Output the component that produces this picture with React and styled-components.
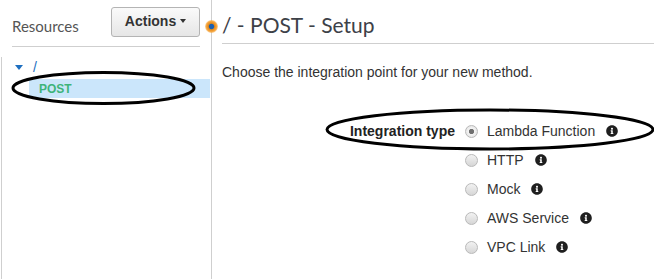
import React from "react";
import styled, { createGlobalStyle } from "styled-components";
import { FaInfoCircle } from "react-icons/fa";

const Global = createGlobalStyle`
  html, body { margin: 0; padding: 0; background: #fff; }
  body { font-family: "Liberation Sans", Arial, sans-serif; color: #333; }
  * { box-sizing: border-box; }
`;

const Page = styled.div`
  position: relative;
  display: flex;
  width: 654px;
  height: 279px;
  overflow: hidden;
  background: #fff;
`;

const Sidebar = styled.aside`
  width: 212px;
  flex: none;
  display: flex;
  flex-direction: column;
  border-right: 1px solid #cfcfcf;
`;

const SideHeader = styled.div`
  height: 47px;
  margin: 0 11px 0 12px;
  padding-top: 7px;
  display: flex;
  align-items: flex-start;
  justify-content: space-between;
  border-bottom: 1px solid #cfcfcf;
`;

const SideTitle = styled.span`
  margin-top: 10px;
  font-family: Lato, "Liberation Sans", sans-serif;
  font-size: 15px;
  line-height: 18px;
  color: #555;
`;

const ActionsButton = styled.button`
  width: 89px;
  height: 30px;
  display: flex;
  align-items: center;
  justify-content: center;
  gap: 4px;
  padding: 0 0 2px 0;
  border: 1px solid #b4b4b4;
  border-radius: 3px;
  background: linear-gradient(#fafafa, #e6e6e6);
  font-family: "Liberation Sans", Arial, sans-serif;
  font-weight: bold;
  font-size: 14px;
  color: #333;
`;

const Caret = styled.span`
  width: 0;
  height: 0;
  border-left: ${(p) => p.$w}px solid transparent;
  border-right: ${(p) => p.$w}px solid transparent;
  border-top: ${(p) => p.$h}px solid ${(p) => p.$color};
`;

const Tree = styled.div`
  flex: 1;
  margin: 10px 0 0 1px;
  border-left: 1px solid #cfcfcf;
  display: flex;
  flex-direction: column;
`;

const RootRow = styled.div`
  height: 20px;
  margin-bottom: 2px;
  padding-left: 13px;
  display: flex;
  align-items: center;
  gap: 10px;
  font-size: 14px;
  color: #1e6fc0;
`;

const MethodRow = styled.div`
  height: 19px;
  margin-left: 27px;
  margin-right: 1px;
  padding-left: 10px;
  display: flex;
  align-items: center;
  background: #cbe6fb;
  font-size: 12px;
  font-weight: bold;
  color: #3fb47a;
`;

const Main = styled.main`
  flex: 1;
  padding-left: 10px;
  display: flex;
  flex-direction: column;
`;

const TitleBar = styled.h1`
  margin: 0;
  height: 44px;
  padding-top: 12px;
  border-bottom: 1px solid #cfcfcf;
  font-family: Lato, "Liberation Sans", sans-serif;
  font-weight: normal;
  font-size: 21px;
  line-height: 26px;
  color: #3d4148;
`;

const Intro = styled.p`
  margin: 20px 0 0 0;
  font-size: 14px;
  line-height: 17px;
  color: #333;
`;

const Form = styled.div`
  margin-top: 35.5px;
  display: grid;
  grid-template-columns: 233px 1fr;
  column-gap: 10px;
`;

const FieldLabel = styled.div`
  height: 29px;
  display: flex;
  align-items: center;
  justify-content: flex-end;
  font-size: 14px;
  font-weight: bold;
  color: #222;
`;

const Options = styled.div`
  display: flex;
  flex-direction: column;
`;

const Option = styled.label`
  height: 29px;
  display: flex;
  align-items: center;
  font-size: 14px;
  color: #333;
`;

const Radio = styled.span`
  width: 13px;
  height: 13px;
  flex: none;
  margin-right: 9px;
  border-radius: 50%;
  border: 1px solid #b9b9b9;
  background: ${(p) =>
    p.$checked
      ? "radial-gradient(circle, #6f6f6f 0, #6f6f6f 2.2px, #f4f4f4 3px, #e4e4e4 6px)"
      : "linear-gradient(#f2f2f2, #d6d6d6)"};
`;

const Info = styled(FaInfoCircle)`
  margin-left: 11px;
  width: 12px;
  height: 12px;
  color: #1f1f1f;
`;

const Marker = styled.span`
  position: absolute;
  left: 205px;
  top: 20px;
  width: 13px;
  height: 13px;
  border-radius: 50%;
  background: radial-gradient(
    circle,
    #1a5fb0 0,
    #1a5fb0 2.2px,
    #e58a1c 3.2px,
    #f4a43c 5px,
    rgba(246, 170, 70, 0.5) 6.5px
  );
`;

const Annotations = styled.svg`
  position: absolute;
  left: 0;
  top: 0;
  width: 654px;
  height: 279px;
  pointer-events: none;
`;

const options = [
  { label: "Lambda Function", checked: true },
  { label: "HTTP" },
  { label: "Mock" },
  { label: "AWS Service" },
  { label: "VPC Link" },
];

export default function App() {
  return (
    <>
      <Global />
      <Page>
        <Sidebar>
          <SideHeader>
            <SideTitle>Resources</SideTitle>
            <ActionsButton>
              Actions
              <Caret $w={3.5} $h={4} $color="#333" />
            </ActionsButton>
          </SideHeader>
          <Tree>
            <RootRow>
              <Caret $w={4} $h={5} $color="#1e6fc0" />
              <span>/</span>
            </RootRow>
            <MethodRow>POST</MethodRow>
          </Tree>
        </Sidebar>
        <Main>
          <TitleBar>/ - POST - Setup</TitleBar>
          <Intro>Choose the integration point for your new method.</Intro>
          <Form>
            <FieldLabel>Integration type</FieldLabel>
            <Options>
              {options.map((o) => (
                <Option key={o.label}>
                  <Radio $checked={o.checked} />
                  {o.label}
                  <Info />
                </Option>
              ))}
            </Options>
          </Form>
        </Main>
        <Marker />
        <Annotations viewBox="0 0 654 279">
          <ellipse cx="103.5" cy="88" rx="90.5" ry="15.5" fill="none" stroke="#000" strokeWidth="3" />
          <ellipse cx="490" cy="129.5" rx="163" ry="19.5" fill="none" stroke="#000" strokeWidth="3" />
        </Annotations>
      </Page>
    </>
  );
}
